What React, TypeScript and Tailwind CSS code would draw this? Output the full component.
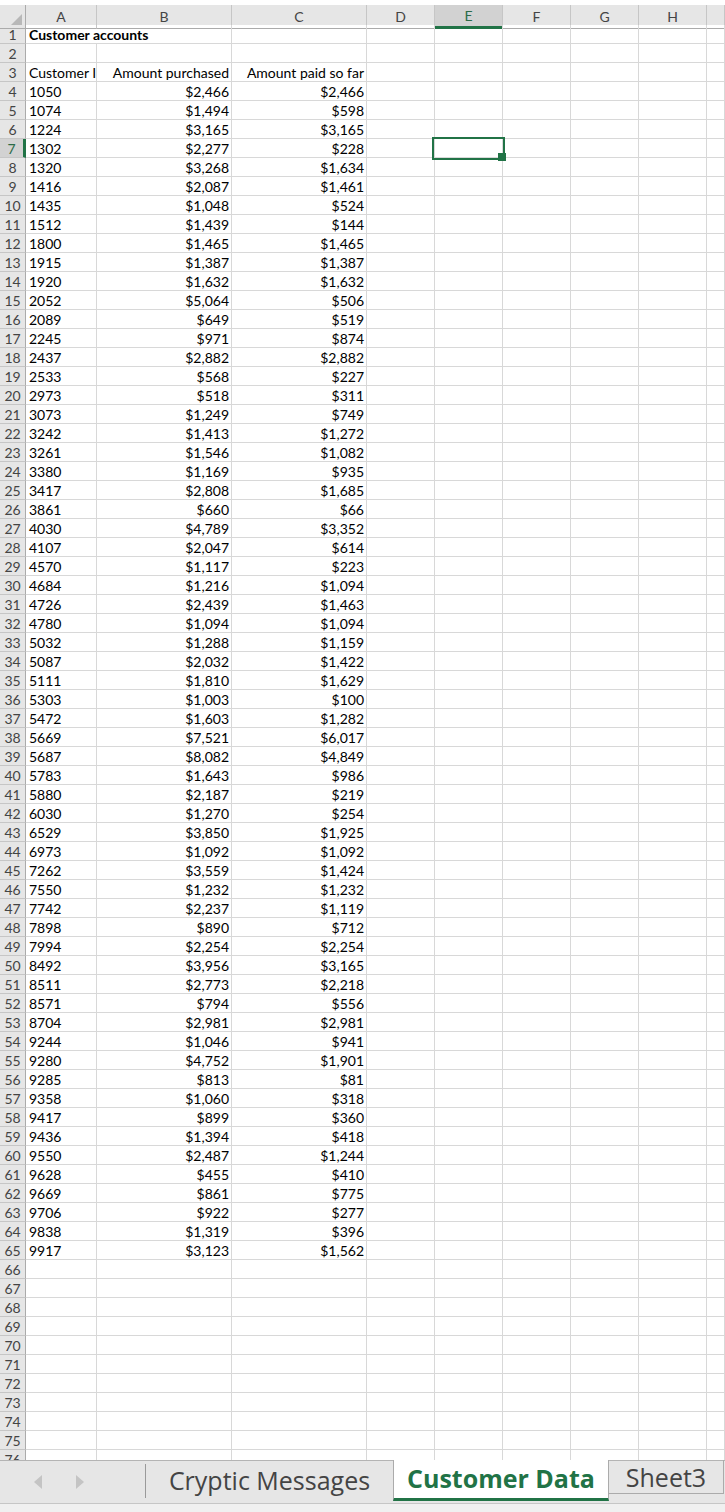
import React from "react";

const data: [string, string, string][] = [
  ["1050", "$2,466", "$2,466"],
  ["1074", "$1,494", "$598"],
  ["1224", "$3,165", "$3,165"],
  ["1302", "$2,277", "$228"],
  ["1320", "$3,268", "$1,634"],
  ["1416", "$2,087", "$1,461"],
  ["1435", "$1,048", "$524"],
  ["1512", "$1,439", "$144"],
  ["1800", "$1,465", "$1,465"],
  ["1915", "$1,387", "$1,387"],
  ["1920", "$1,632", "$1,632"],
  ["2052", "$5,064", "$506"],
  ["2089", "$649", "$519"],
  ["2245", "$971", "$874"],
  ["2437", "$2,882", "$2,882"],
  ["2533", "$568", "$227"],
  ["2973", "$518", "$311"],
  ["3073", "$1,249", "$749"],
  ["3242", "$1,413", "$1,272"],
  ["3261", "$1,546", "$1,082"],
  ["3380", "$1,169", "$935"],
  ["3417", "$2,808", "$1,685"],
  ["3861", "$660", "$66"],
  ["4030", "$4,789", "$3,352"],
  ["4107", "$2,047", "$614"],
  ["4570", "$1,117", "$223"],
  ["4684", "$1,216", "$1,094"],
  ["4726", "$2,439", "$1,463"],
  ["4780", "$1,094", "$1,094"],
  ["5032", "$1,288", "$1,159"],
  ["5087", "$2,032", "$1,422"],
  ["5111", "$1,810", "$1,629"],
  ["5303", "$1,003", "$100"],
  ["5472", "$1,603", "$1,282"],
  ["5669", "$7,521", "$6,017"],
  ["5687", "$8,082", "$4,849"],
  ["5783", "$1,643", "$986"],
  ["5880", "$2,187", "$219"],
  ["6030", "$1,270", "$254"],
  ["6529", "$3,850", "$1,925"],
  ["6973", "$1,092", "$1,092"],
  ["7262", "$3,559", "$1,424"],
  ["7550", "$1,232", "$1,232"],
  ["7742", "$2,237", "$1,119"],
  ["7898", "$890", "$712"],
  ["7994", "$2,254", "$2,254"],
  ["8492", "$3,956", "$3,165"],
  ["8511", "$2,773", "$2,218"],
  ["8571", "$794", "$556"],
  ["8704", "$2,981", "$2,981"],
  ["9244", "$1,046", "$941"],
  ["9280", "$4,752", "$1,901"],
  ["9285", "$813", "$81"],
  ["9358", "$1,060", "$318"],
  ["9417", "$899", "$360"],
  ["9436", "$1,394", "$418"],
  ["9550", "$2,487", "$1,244"],
  ["9628", "$455", "$410"],
  ["9669", "$861", "$775"],
  ["9706", "$922", "$277"],
  ["9838", "$1,319", "$396"],
  ["9917", "$3,123", "$1,562"],
];

// column I is cut off by the window edge, its letter isn't visible
const COLS = ["A", "B", "C", "D", "E", "F", "G", "H", ""];
const TOTAL_ROWS = 76;

const gridCols = "grid grid-cols-[26px_71px_135px_135px_68px_68px_68px_68px_68px_1fr]";
const cell = "border-r border-b border-[#d8d8d8] overflow-hidden whitespace-nowrap flex items-center";

function RowHeader({ n }: { n: number }) {
  const selected = n === 7;
  return (
    <div
      className={
        selected
          ? "flex items-center justify-center bg-[#d2d2d2] border-b border-[#c6c6c6] border-r-[3px] border-r-[#217346] text-[#2b6b47]"
          : "flex items-center justify-center bg-[#e6e6e6] border-b border-[#c6c6c6] border-r border-r-[#ababab] text-[#444]"
      }
    >
      {n}
    </div>
  );
}

function SelectedCell() {
  return (
    <div className={`${cell} relative overflow-visible`}>
      <div className="absolute -left-[3px] -top-[2px] w-[73px] h-[23px] border-2 border-[#217346] z-10" />
      <div className="absolute left-[63px] top-[14px] w-[8px] h-[8px] bg-[#217346] z-20" />
    </div>
  );
}

function Row({ n }: { n: number }) {
  const rec = n >= 4 ? data[n - 4] : undefined;
  let a: React.ReactNode = null;
  let b: React.ReactNode = null;
  let c: React.ReactNode = null;
  if (n === 3) {
    a = "Customer ID";
    b = "Amount purchased";
    c = "Amount paid so far";
  } else if (rec) {
    [a, b, c] = rec;
  }

  return (
    <>
      <RowHeader n={n} />
      {n === 1 ? (
        <div className={`${cell} col-span-2 pl-[3px] font-bold`}>Customer accounts</div>
      ) : (
        <>
          <div className={`${cell} pl-[3px]`}>{a}</div>
          <div className={`${cell} justify-end pr-[2px]`}>{b}</div>
        </>
      )}
      <div className={`${cell} justify-end pr-[2px]`}>{c}</div>
      <div className={cell} />
      {n === 7 ? <SelectedCell /> : <div className={cell} />}
      <div className={cell} />
      <div className={cell} />
      <div className={cell} />
      <div className={cell} />
    </>
  );
}

function ColumnHeaders() {
  return (
    <div className={`${gridCols} h-[20px] bg-[#e6e6e6] text-[#444]`}>
      <div className="relative border-r border-b border-[#ababab]">
        <svg className="absolute right-[3px] bottom-[3px]" width="11" height="11" viewBox="0 0 11 11">
          <polygon points="11,0 11,11 0,11" fill="#b8b8b8" />
        </svg>
      </div>
      {COLS.map((col, i) =>
        col === "E" ? (
          <div
            key={i}
            className="flex items-center justify-center bg-[#d2d2d2] border-r border-[#c6c6c6] border-b-[3px] border-b-[#217346] text-[#2b6b47]"
          >
            {col}
          </div>
        ) : (
          <div
            key={i}
            className="flex items-center justify-center border-r border-[#c6c6c6] border-b border-b-[#ababab]"
          >
            {col}
          </div>
        )
      )}
    </div>
  );
}

function TabBar() {
  return (
    <div className="flex h-[43px] shrink-0 bg-[#e6e6e6] border-t border-[#b4b4b4] font-['Open_Sans',sans-serif] text-[#444]">
      <div className="flex w-[145px] items-center">
        <svg className="ml-[33px]" width="10" height="14" viewBox="0 0 10 14">
          <polygon points="9,0 9,14 1,7" fill="#c4c4c4" />
        </svg>
        <svg className="ml-[32px]" width="10" height="14" viewBox="0 0 10 14">
          <polygon points="1,0 1,14 9,7" fill="#c4c4c4" />
        </svg>
      </div>
      <div className="mt-[3px] h-[34px] w-px bg-[#9a9a9a]" />
      <div className="flex w-[247px] items-center justify-center text-[25px] leading-none pb-[4px]">
        Cryptic Messages
      </div>
      <div className="-mt-px flex h-[41px] w-[216px] items-center justify-center border-x border-[#ababab] bg-white border-b-[3px] border-b-[#217346] text-[25px] font-bold leading-none text-[#217346] pb-[2px]">
        Customer Data
      </div>
      <div className="-mt-px flex h-[34px] w-[115px] items-center justify-center border-r border-b border-[#ababab] text-[25px] leading-none pt-[2px]">
        Sheet3
      </div>
    </div>
  );
}

export default function App() {
  const rowNumbers = Array.from({ length: TOTAL_ROWS }, (_, i) => i + 1);
  return (
    <div className="flex h-[1512px] w-[725px] flex-col overflow-hidden bg-white font-['Lato',sans-serif] text-[14px] text-black">
      <div className="flex h-[1460px] shrink-0 flex-col pt-[5px]">
        <ColumnHeaders />
        <div className={`${gridCols} auto-rows-[19px] flex-1 overflow-hidden content-start`}>
          {rowNumbers.map((n) => (
            <Row key={n} n={n} />
          ))}
        </div>
      </div>
      <TabBar />
      <div className="flex-1 border-t border-[#c6c6c6] bg-[#f0f0f0]" />
    </div>
  );
}
